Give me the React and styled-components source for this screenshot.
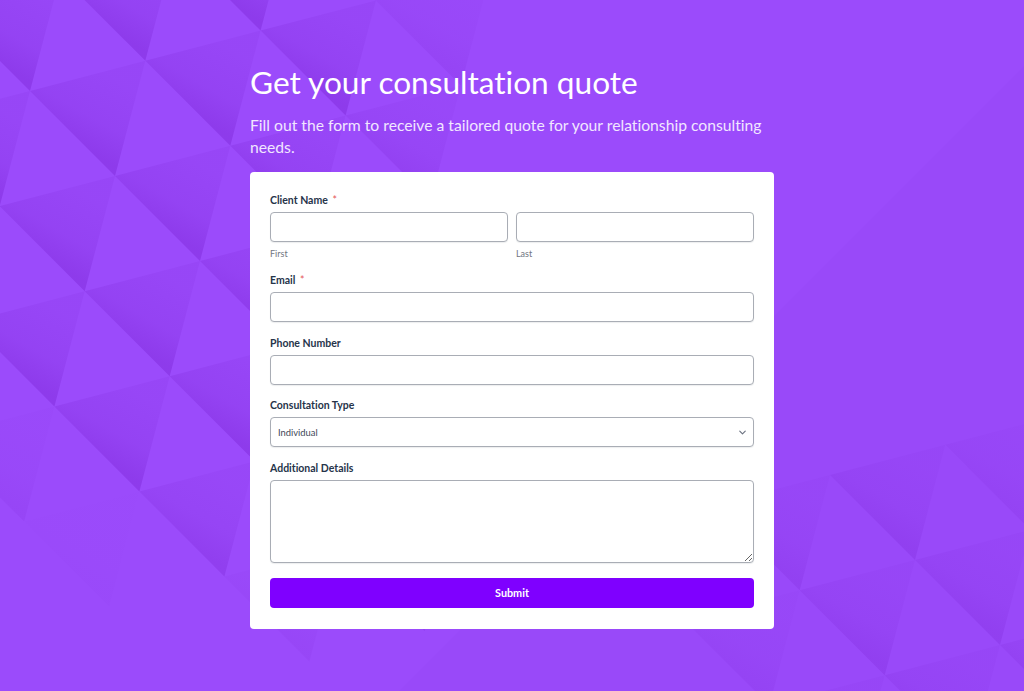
import React from "react";
import styled, { createGlobalStyle } from "styled-components";
import { ChevronDown } from "lucide-react";

const GlobalStyle = createGlobalStyle`
  * { box-sizing: border-box; }
  html, body { margin: 0; padding: 0; }
  body {
    font-family: Lato, "Open Sans", sans-serif;
    font-variant-ligatures: none;
    background: #9b4bfb;
  }
`;

const clamp = (v) => Math.max(0, Math.min(1, v));

// left lattice: strong at the top left, fades out to the right and bottom
function leftFade(cx, cy) {
  const right = clamp((500 - cx) / 140);
  const diagonal = clamp((500 - (cy - 0.6 * cx)) / 150);
  const bottom = clamp((640 - cy) / 90);
  return right * diagonal * bottom;
}

// right lattice: only shows up in the lower right corner
function rightFade(cx, cy) {
  return clamp((cy - 420) / 70) * clamp((cx - 680) / 120) * 0.6;
}

function buildTriangles(ox, oy, fade) {
  const list = [];
  for (let n = -8; n <= 12; n++) {
    for (let m = -8; m <= 12; m++) {
      const x = ox + n * 115.3 + m * 85;
      const y = oy - n * 30.2 + m * 85;
      const cx = x + 66.8;
      const cy = y + 18.3;
      if (cx < -120 || cx > 1140 || cy < -120 || cy > 800) continue;
      const opacity = fade(cx, cy);
      if (opacity > 0.01) list.push({ x, y, opacity, key: `${ox}-${n}-${m}` });
    }
  }
  return list;
}

const triangles = [
  ...buildTriangles(30, 91, leftFade),
  ...buildTriangles(915, 560, rightFade),
];

function Facets() {
  return (
    <Backdrop viewBox="0 0 1024 691" preserveAspectRatio="none" aria-hidden="true">
      <defs>
        <linearGradient id="facet" gradientUnits="userSpaceOnUse" x1="62" y1="62" x2="100" y2="-4">
          <stop offset="0" stopColor="#6a10c0" stopOpacity="0.27" />
          <stop offset="0.4" stopColor="#6a10c0" stopOpacity="0.14" />
          <stop offset="1" stopColor="#6a10c0" stopOpacity="0.08" />
        </linearGradient>
      </defs>
      <polygon points="1090,0 1024,66 1024,691 399,691" fill="#7f20d8" opacity="0.05" />
      {triangles.map((t) => (
        <polygon
          key={t.key}
          points="0,0 115.3,-30.2 85,85"
          fill="url(#facet)"
          opacity={t.opacity}
          transform={`translate(${t.x} ${t.y})`}
        />
      ))}
    </Backdrop>
  );
}

export default function App() {
  return (
    <Page>
      <GlobalStyle />
      <Facets />
      <Column>
        <Title>Get your consultation quote</Title>
        <Intro>Fill out the form to receive a tailored quote for your relationship consulting needs.</Intro>
        <Card>
          <Field>
            <Label>
              Client Name <Star>*</Star>
            </Label>
            <NameRow>
              <div>
                <Input type="text" />
                <SubLabel>First</SubLabel>
              </div>
              <div>
                <Input type="text" />
                <SubLabel>Last</SubLabel>
              </div>
            </NameRow>
          </Field>
          <Field>
            <Label>
              Email <Star>*</Star>
            </Label>
            <Input type="email" />
          </Field>
          <Field>
            <Label>Phone Number</Label>
            <Input type="tel" />
          </Field>
          <Field>
            <Label>Consultation Type</Label>
            <SelectWrap>
              <Select defaultValue="Individual">
                <option>Individual</option>
                <option>Couple</option>
                <option>Family</option>
              </Select>
              <Chevron size={11} strokeWidth={2.5} />
            </SelectWrap>
          </Field>
          <Field>
            <Label>Additional Details</Label>
            <TextArea />
          </Field>
          <Submit type="button">Submit</Submit>
        </Card>
      </Column>
    </Page>
  );
}

const Page = styled.div`
  position: relative;
  min-height: 691px;
  height: 691px;
  overflow: hidden;
  display: flex;
  justify-content: center;
  padding: 62px 0 0;
`;

const Backdrop = styled.svg`
  position: absolute;
  inset: 0;
  width: 100%;
  height: 100%;
`;

const Column = styled.main`
  position: relative;
  width: 524px;
`;

const Title = styled.h1`
  margin: 0 0 12px;
  font-size: 31.6px;
  line-height: 40px;
  font-weight: 400;
  color: #fff;
`;

const Intro = styled.p`
  margin: 0 0 14px;
  font-size: 15.7px;
  line-height: 22px;
  color: #f1e6ff;
`;

const Card = styled.form`
  background: #fff;
  border-radius: 4px;
  padding: 20px 20px 21px;
  height: 457px;
`;

const Field = styled.div`
  margin-bottom: 12.6px;
`;

const Label = styled.label`
  display: block;
  height: 16px;
  margin-bottom: 4px;
  font-size: 10.5px;
  line-height: 16px;
  font-weight: 700;
  color: #26344a;
`;

const Star = styled.span`
  color: #e5585c;
  margin-left: 2px;
  font-weight: 400;
`;

const NameRow = styled.div`
  display: grid;
  grid-template-columns: 1fr 1fr;
  gap: 8px;
`;

const SubLabel = styled.div`
  margin-top: 6px;
  font-size: 9px;
  line-height: 11.4px;
  color: #71767f;
`;

const controlStyles = `
  display: block;
  width: 100%;
  border: 1px solid #a9adb5;
  border-radius: 4px;
  background: #fff;
  box-shadow: 0 1px 1px rgba(31, 41, 55, 0.08);
  outline: none;
`;

const Input = styled.input`
  ${controlStyles}
  height: 30px;
  padding: 0 8px;
`;

const SelectWrap = styled.div`
  position: relative;
`;

const Select = styled.select`
  ${controlStyles}
  height: 30px;
  padding: 0 7px;
  appearance: none;
  font-family: inherit;
  font-size: 9.4px;
  color: #3d4757;
`;

const Chevron = styled(ChevronDown)`
  position: absolute;
  top: 10px;
  right: 6px;
  color: #6b7280;
`;

const TextArea = styled.textarea`
  ${controlStyles}
  height: 83px;
  padding: 8px;
  resize: vertical;
`;

const Submit = styled.button`
  display: block;
  width: 100%;
  height: 30px;
  margin-top: 15px;
  border: 0;
  border-radius: 4px;
  background: #7f00ff;
  color: #fff;
  font-family: inherit;
  font-size: 10.8px;
  font-weight: 700;
  padding-top: 1px;
`;
